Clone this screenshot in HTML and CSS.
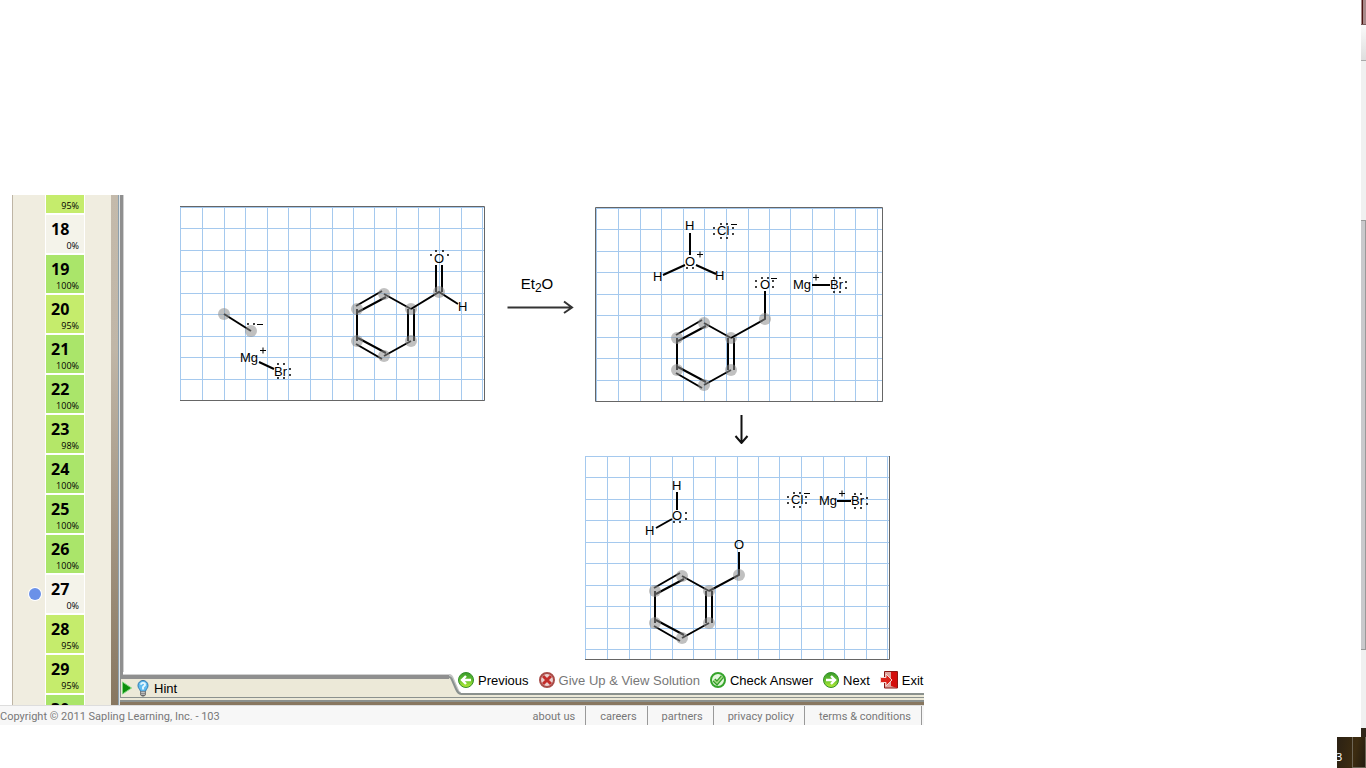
FILE: index.html
```html
<!DOCTYPE html>
<html lang="en">
<head>
    <meta charset="UTF-8">
    <meta name="viewport" content="width=device-width, initial-scale=1.0">
    <title>Sapling Learning</title>
    <link rel="stylesheet" href="styles.css">
</head>
<body>

    <!-- shared drawing parts -->
    <svg class="defs" aria-hidden="true">
        <defs>
            <path id="grid" class="grid-line" d="M0.5 0V210M22.5 0V210M44.5 0V210M65.5 0V210M87.5 0V210M108.5 0V210M130.5 0V210M152.5 0V210M173.5 0V210M194.5 0V210M216.5 0V210M238.5 0V210M259.5 0V210M281.5 0V210M302.5 0V210M0 1.5H310M0 22.5H310M0 44.5H310M0 65.5H310M0 87.5H310M0 108.5H310M0 130.5H310M0 151.5H310M0 173.5H310M0 194.5H310"/>
            <!-- benzene ring, origin in its centre -->
            <g id="ring">
                <path class="bond" d="M0 -31L27 -16M27 16L0 31M-27 -16V16M24 -16V16M30 -16V16M-28 -19L-2 -34M-26 -13L2 -28M-28 19L-2 34M-26 13L2 28"/>
                <g class="atom"><circle cx="0" cy="-31" r="6"/><circle cx="27" cy="-16" r="6"/><circle cx="27" cy="16" r="6"/><circle cx="0" cy="31" r="6"/><circle cx="-27" cy="16" r="6"/><circle cx="-27" cy="-16" r="6"/></g>
            </g>
            <path id="pair" class="dots" d="M-3 0h0M3 0h0"/>
            <path id="pair-v" class="dots" d="M0 -3v0M0 3v0"/>
            <linearGradient id="green" x1="0" y1="0" x2="0" y2="1">
                <stop offset="0" stop-color="#3a9a2c"/><stop offset="0.45" stop-color="#5dbb2e"/><stop offset="1" stop-color="#b6ee35"/>
            </linearGradient>
        </defs>
    </svg>

    <div class="app">
        <div class="workspace">
            <nav class="questions" aria-label="Questions">
                <ul>
                    <li class="good"><a href="#">17<span>95%</span></a></li>
                    <li><a href="#">18<span>0%</span></a></li>
                    <li class="full"><a href="#">19<span>100%</span></a></li>
                    <li class="good"><a href="#">20<span>95%</span></a></li>
                    <li class="full"><a href="#">21<span>100%</span></a></li>
                    <li class="full"><a href="#">22<span>100%</span></a></li>
                    <li class="high"><a href="#">23<span>98%</span></a></li>
                    <li class="full"><a href="#">24<span>100%</span></a></li>
                    <li class="full"><a href="#">25<span>100%</span></a></li>
                    <li class="full"><a href="#">26<span>100%</span></a></li>
                    <li class="current"><a href="#">27<span>0%</span></a></li>
                    <li class="good"><a href="#">28<span>95%</span></a></li>
                    <li class="good"><a href="#">29<span>95%</span></a></li>
                    <li class="full"><a href="#">30</a></li>
                </ul>
            </nav>

            <div class="splitter"></div>

            <main class="panel">
                <div class="stage">
                    <svg class="sketch first" width="305" height="195" role="img" aria-label="Reactants">
                        <use href="#grid"/>
                        <path class="frame" d="M0 0.5H304.5V194.5H0"/>
                        <path class="bond" d="M44 108L71 125"/>
                        <g class="atom"><circle cx="44" cy="108" r="6"/><circle cx="71" cy="125" r="6"/></g>
                        <use href="#pair" x="71" y="118"/>
                        <path class="charge" d="M77 118.5h6M80 144.500h6M83 141.500v6"/>
                        <path class="bond" d="M79 156L94 163"/>
                        <text x="60" y="156">Mg</text>
                        <text x="94" y="170">Br</text>
                        <use href="#pair" x="101" y="158"/><use href="#pair" x="101" y="172"/><use href="#pair-v" x="110" y="166"/>
                        <use href="#ring" x="204" y="119"/>
                        <path class="bond" d="M231 103L259 86L278 98M256 86V59M262 86V59"/>
                        <g class="atom"><circle cx="259" cy="86" r="6"/></g>
                        <text x="254" y="57">O</text>
                        <text x="278" y="105">H</text>
                        <path class="dots" d="M256 45h0M263 45h0M251 49h0M268 49h0"/>
                    </svg>

                    <div class="reagent">
                        <span>Et<sub>2</sub>O</span>
                        <svg width="67" height="14" aria-hidden="true"><path d="M0.500 7.500H65M57 1.500L65 7.500L57 13" fill="none" stroke="#333" stroke-width="2"/></svg>
                    </div>

                    <svg class="sketch second" width="288" height="195" role="img" aria-label="Intermediate">
                        <use href="#grid" x="1"/>
                        <path class="frame" d="M0.500 194.500V0.500H287.500V194.500Z"/>
                        <path class="bond" d="M95 26V48M90 58L68 68M101 58L121 67"/>
                        <text x="90" y="23">H</text>
                        <text x="90" y="59">O</text>
                        <text x="58" y="74">H</text>
                        <text x="120" y="73">H</text>
                        <path class="charge" d="M102 47.500h6M105 44.500v6M136 17.500h6M176 71.500h6M218 70.500h6M221 67.500v6"/>
                        <use href="#pair" x="95" y="61"/>
                        <text x="122" y="28">Cl</text>
                        <use href="#pair" x="129" y="17"/><use href="#pair" x="129" y="31"/><use href="#pair-v" x="119" y="24"/><use href="#pair-v" x="138" y="24"/>
                        <use href="#ring" x="109" y="147"/>
                        <path class="bond" d="M136 131L170 112V84M217 78H235"/>
                        <g class="atom"><circle cx="170" cy="112" r="6"/></g>
                        <text x="165" y="82">O</text>
                        <use href="#pair" x="170" y="71"/><use href="#pair-v" x="161" y="77"/><use href="#pair-v" x="178" y="77"/>
                        <text x="198" y="82">Mg</text>
                        <text x="235" y="82">Br</text>
                        <use href="#pair" x="242" y="71"/><use href="#pair" x="242" y="85"/><use href="#pair-v" x="251" y="78"/>
                    </svg>

                    <svg class="down" width="24" height="30" aria-hidden="true"><path d="M14.500 1V29M8.500 22L14.500 29L20.500 22" fill="none" stroke="#111" stroke-width="2"/></svg>

                    <svg class="sketch third" width="305" height="204" role="img" aria-label="Products">
                        <use href="#grid" y="-1"/>
                        <path class="frame" d="M304.500 0V203.500H0"/>
                        <path class="bond" d="M92 36V54M87 63L71 72M124 135L154 119V96M252 45H266"/>
                        <text x="87" y="34">H</text>
                        <text x="87" y="64">O</text>
                        <text x="60" y="79">H</text>
                        <use href="#pair" x="92" y="66"/><use href="#pair-v" x="101" y="60"/>
                        <use href="#ring" x="97" y="151"/>
                        <g class="atom"><circle cx="154" cy="119" r="6"/></g>
                        <text x="149" y="93">O</text>
                        <text x="206" y="48">Cl</text>
                        <use href="#pair" x="212" y="37"/><use href="#pair" x="212" y="51"/><use href="#pair-v" x="203" y="44"/><use href="#pair-v" x="221" y="44"/>
                        <path class="charge" d="M219 37.500h6M254 37.500h6M257 34.500v6"/>
                        <text x="234" y="49">Mg</text>
                        <text x="266" y="49">Br</text>
                        <use href="#pair" x="273" y="38"/><use href="#pair" x="273" y="52"/><use href="#pair-v" x="282" y="45"/>
                    </svg>
                </div>

                <div class="toolbar">
                    <button class="hint">
                        <svg width="10" height="14" viewBox="0 0 10 14"><path d="M0.500 1L9.500 7L0.500 13Z" fill="#0c8f0c" stroke="#7ed67e"/></svg>
                        <svg width="12" height="17" viewBox="0 0 12 18"><path d="M6 0.500A5.300 5.300 0 0 0 0.700 6C0.700 9 3 9.500 3.300 12H8.700C9 9.500 11.300 9 11.300 6A5.300 5.300 0 0 0 6 0.500Z" fill="#62bdf0" stroke="#2874ad"/><path d="M4 5Q4 3 6 3Q8.500 3 8 5.500L6 7.500V10" fill="none" stroke="#e4f7ff" stroke-width="2"/><path d="M3 12h6v4l-2 1.500H5L3 16Z" fill="#666"/><path d="M4 13h4M4 15h4" stroke="#e8e8e8"/></svg>
                        Hint
                    </button>
                    <svg class="slope" width="12" height="26" aria-hidden="true"><path d="M0 5Q2 5 3 8L7 17Q9 21 12 21V26H0Z" fill="#ece9d8"/><path d="M0 3Q3 3 4 7L8 16Q9 20 12 21.500" fill="none" stroke="#c4c4c4" stroke-width="2"/><path d="M0 5Q2 5 3 8L7 17Q9 21.500 12 22" fill="none" stroke="#89918f" stroke-width="2"/></svg>
                    <div class="actions">
                        <button>
                            <svg width="16" height="16" viewBox="0 0 16 16"><circle cx="8" cy="8" r="7.500" fill="url(#green)" stroke="#338f2a"/><path d="M13 8H4M8 4L4 8L8 12" fill="none" stroke="#fff" stroke-width="2.400"/></svg>
                            Previous
                        </button>
                        <button class="muted">
                            <svg width="16" height="16" viewBox="0 0 16 16"><circle cx="8" cy="8" r="7" fill="#ead0ce" stroke="#a84c48" stroke-width="2"/><path d="M4 4L12 12M12 4L4 12" stroke="#c32d2a" stroke-width="3"/></svg>
                            Give Up &amp; View Solution
                        </button>
                        <button>
                            <svg width="16" height="16" viewBox="0 0 16 16"><circle cx="8" cy="8" r="7" fill="#e4f7dc" stroke="#35a42b" stroke-width="2"/><path d="M4 8L7 11L12.500 4.500" fill="none" stroke="#359c2c" stroke-width="4"/><path d="M4 8L7 11L12.500 4.500" fill="none" stroke="#a5dd82" stroke-width="1.500"/></svg>
                            Check Answer
                        </button>
                        <button>
                            <svg width="16" height="16" viewBox="0 0 16 16"><circle cx="8" cy="8" r="7.500" fill="url(#green)" stroke="#338f2a"/><path d="M3 8H12M8 4L12 8L8 12" fill="none" stroke="#fff" stroke-width="2.400"/></svg>
                            Next
                        </button>
                        <button>
                            <svg width="18" height="18" viewBox="0 0 18 18"><path d="M4.500 0.500H17.500V17H4.500Z" fill="#dda49d" stroke="#8a1712"/><path d="M11 1H17V17L11 15Z" fill="#d40d0b"/><path d="M0.500 6.500H6V3L12 9L6 15V11.500H0.500Z" fill="#dd2219" stroke="#f6d6d2"/></svg>
                            Exit
                        </button>
                    </div>
                </div>
            </main>
        </div>

        <footer>
            <p>Copyright © 2011 Sapling Learning, Inc. - 103</p>
            <nav aria-label="Footer">
                <a href="#">about us</a>
                <a href="#">careers</a>
                <a href="#">partners</a>
                <a href="#">privacy policy</a>
                <a href="#">terms &amp; conditions</a>
            </nav>
        </footer>
    </div>

    <div class="window-edge">
        <div class="titlebar"></div>
        <div class="tools"></div>
        <div class="track-top"></div>
        <div class="thumb"></div>
        <div class="track-bottom"></div>
        <div class="desk"></div>
    </div>
    <div class="taskbar"><span>3</span><i></i></div>

</body>
</html>
```

FILE: styles.css
```css
* {
    box-sizing: border-box;
}

body {
    margin: 0;
    min-height: 100vh;
    display: flex;
    justify-content: space-between;
    background: #fff;
    font-family: "Liberation Sans", Arial, sans-serif;
    font-size: 13px;
    color: #000;
}

.defs {
    position: absolute;
    width: 0;
    height: 0;
}

a {
    color: inherit;
    text-decoration: none;
}

button {
    display: flex;
    align-items: center;
    gap: 4px;
    padding: 0;
    border: none;
    background: none;
    font: inherit;
    color: inherit;
    white-space: nowrap;
    cursor: pointer;
}

button svg {
    flex: none;
}

.app {
    flex: 0 1 924px;
    padding-top: 195px;
    overflow: hidden;
}

.workspace {
    display: flex;
    height: 510px;
    padding-left: 12px;
    overflow: hidden;
}

/* question list */
.questions {
    flex: none;
    width: 99px;
    padding-left: 32px;
    border-left: 1px solid #beb5a5;
    background: #f0ede0;
}

.questions ul {
    width: 40px;
    margin: -20px 0 0;
    padding: 0 1px;
    list-style: none;
    background: #fff;
}

.questions li {
    position: relative;
    height: 38px;
    margin-bottom: 2px;
    background: #f4f3ea;
}

.questions .good {
    background: #c5ec6c;
}

.questions .high {
    background: #b4e768;
}

.questions .full {
    background: #aae56a;
}

.questions a {
    display: block;
    padding: 4px 5px 0;
    font: bold 16px/20px "Open Sans", "Noto Sans", sans-serif;
}

.questions span {
    display: block;
    font-size: 9px;
    font-weight: normal;
    line-height: 13px;
    text-align: right;
}

.current::before {
    content: "";
    position: absolute;
    left: -17px;
    top: 13px;
    width: 12px;
    height: 12px;
    border-radius: 50%;
    background: #6a91e8;
    box-shadow: 0 0 0 1px #fff;
}

.splitter {
    flex: none;
    width: 9px;
    border-right: 1px solid #dfe4e6;
    background: linear-gradient(#c4baab, #c0b6a7 30%, #887760);
    box-shadow: inset -1px 0 #8da0ad;
}

.panel {
    flex: 1;
    min-width: 0;
    display: flex;
    flex-direction: column;
    border-bottom: 3px solid #887760;
}

/* drawing area */
.stage {
    flex: 1;
    display: grid;
    grid-template-columns: 305px 100px 308px;
    grid-template-rows: 196px 54px 204px;
    align-content: start;
    padding: 11px 0 0 57px;
    border-left: 3px solid #8f8f8f;
    box-shadow: inset 1px 0 #d0d0d0;
}

.sketch {
    font-size: 13px;
}

.second {
    justify-self: center;
    align-self: end;
}

.third {
    grid-column: 3;
}

.down {
    grid-column: 3;
    place-self: center;
}

.reagent {
    display: flex;
    flex-direction: column;
    align-items: center;
    gap: 6px;
    padding: 68px 0 0 10px;
    font-size: 15px;
    line-height: 20px;
}

.reagent span {
    padding-right: 6px;
}

.reagent sub {
    font-size: 12px;
    line-height: 0;
    vertical-align: -3px;
}

.grid-line {
    fill: none;
    stroke: #a5c9ee;
}

.frame {
    fill: none;
    stroke: #666;
}

.bond {
    fill: none;
    stroke: #000;
    stroke-width: 2;
}

.atom {
    fill: #8c8c8c;
    fill-opacity: 0.55;
}

.dots {
    stroke: #000;
    stroke-width: 2;
    stroke-linecap: round;
}

.charge {
    stroke: #000;
}

/* bottom bar */
.toolbar {
    display: flex;
    height: 30px;
    border-bottom: 2px solid #8b918e;
    background:
        linear-gradient(#8f8f8f, #8f8f8f) 0 0 / 3px 3px no-repeat,
        linear-gradient(#d0d0d0, #d0d0d0) 3px 2px / 326px 1px no-repeat,
        linear-gradient(#ece9d8, #ece9d8) 0 26px / 100% 2px no-repeat;
}

.hint {
    flex: 0 0 329px;
    height: 23px;
    margin-top: 3px;
    padding: 0 0 0 1px;
    gap: 5px;
    border-top: 4px solid #8f8f8f;
    border-bottom: 1px solid #8b918e;
    border-left: 1px solid #8b918e;
    background: #ece9d8;
}

.slope {
    flex: none;
    border-bottom: 1px solid #8b918e;
}

.actions {
    flex: 1;
    min-width: 0;
    height: 26px;
    display: flex;
    gap: 10px;
    align-items: flex-start;
    margin-left: -3px;
    border-bottom: 1px solid #8b918e;
    background:
        linear-gradient(#8b918e, #8b918e) 3px 21px / 100% 2px no-repeat,
        linear-gradient(#ece9d8, #ece9d8) 3px 23px / 100% 2px no-repeat;
}

.actions button {
    height: 16px;
}

.muted {
    color: #777;
}

footer {
    display: flex;
    justify-content: space-between;
    height: 20px;
    padding-right: 2px;
    border-top: 1px solid #ddd;
    background: #f7f7f7;
    font: 11px/22px Roboto, "Open Sans", sans-serif;
    color: #777;
    white-space: nowrap;
}

footer p {
    margin: 0;
}

footer nav {
    display: flex;
}

footer nav a {
    padding: 0 10px 0 14px;
    border-right: 1px solid #999;
}

/* edge of the browser window behind */
.window-edge {
    flex: none;
    width: 5px;
    height: 100vh;
    display: flex;
    flex-direction: column;
    background: #f0f0f0;
}

.titlebar {
    height: 25px;
    border-bottom: 1px solid #785c5c;
    background: linear-gradient(90deg, #a78a8a 1px, #4c1410 1px 2px, #a78a8a 2px);
}

.tools {
    height: 36px;
    border-bottom: 1px solid #aaa;
    background: linear-gradient(#fafafa, #dedede);
}

.track-top {
    flex: 159;
}

.thumb {
    flex: 430;
    border: 1px solid #999;
    border-left: none;
    background: #c9c9cc;
}

.track-bottom {
    flex: 78;
}

.desk {
    height: 40px;
    background: #30271a;
}

.taskbar {
    position: absolute;
    right: 0;
    bottom: 0;
    display: flex;
    width: 29px;
    height: 31px;
    background: linear-gradient(100deg, #2b2114, #3d2c10 60%, #211a10);
    color: #fff;
    font: 11px/40px "Noto Sans", sans-serif;
    overflow: hidden;
}

.taskbar span {
    flex: 1;
    margin-left: -1px;
}

.taskbar i {
    width: 14px;
    border: 1px solid #6d6555;
    border-top: none;
}
```
